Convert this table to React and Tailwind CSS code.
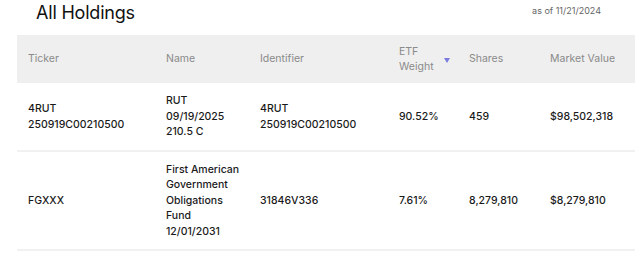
import React from 'react';

const rows = [
  {
    ticker: ['4RUT', '250919C00210500'],
    name: ['RUT', '09/19/2025', '210.5 C'],
    identifier: ['4RUT', '250919C00210500'],
    weight: '90.52%',
    shares: '459',
    value: '$98,502,318',
    h: 'h-[69px]',
  },
  {
    ticker: ['FGXXX'],
    name: ['First American', 'Government', 'Obligations', 'Fund', '12/01/2031'],
    identifier: ['31846V336'],
    weight: '7.61%',
    shares: '8,279,810',
    value: '$8,279,810',
    h: 'h-[99px]',
  },
];

const cols = 'grid grid-cols-[138px_94px_139px_70px_81px_96px]';

const Lines = ({ lines }) => (
  <div className="leading-[15.5px]">
    {lines.map((l) => (
      <div key={l}>{l}</div>
    ))}
  </div>
);

export default function App() {
  return (
    <div className="w-[640px] h-[268px] bg-white font-['Inter',sans-serif] overflow-hidden">
      {/* Title */}
      <div className="flex items-end justify-between h-[35px] pl-[36px] pr-[39px]">
        <h2 className="text-[18px] leading-none text-[#111] mb-[13px] tracking-[-0.2px]">All Holdings</h2>
        <span className="text-[9px] text-[#666] mb-[18px]">as of 11/21/2024</span>
      </div>

      <div className="ml-[17px] w-[618px]">
        {/* Header */}
        <div className={`${cols} h-[48px] bg-[#efefef] items-center text-[10.5px] text-[#8a8a8a]`}>
          <div className="pl-[11px]">Ticker</div>
          <div className="pl-[11px]">Name</div>
          <div className="pl-[11px]">Identifier</div>
          <div className="pl-[11px] flex items-center gap-[10px] leading-[15px]">
            <div>
              ETF
              <br />
              Weight
            </div>
            <svg width="6" height="5" viewBox="0 0 6 5" className="mt-[2px]">
              <path d="M0 0h6L3 5z" fill="#7c7ce0" />
            </svg>
          </div>
          <div className="pl-[11px]">Shares</div>
          <div className="pl-[11px]">Market Value</div>
        </div>

        {/* Rows */}
        {rows.map((r) => (
          <div
            key={r.weight}
            className={`${cols} ${r.h} items-center border-b-2 border-[#f1f1f1] text-[10.5px] font-medium text-[#1a1a1a]`}
          >
            <div className="pl-[11px]"><Lines lines={r.ticker} /></div>
            <div className="pl-[11px]"><Lines lines={r.name} /></div>
            <div className="pl-[11px]"><Lines lines={r.identifier} /></div>
            <div className="pl-[11px]">{r.weight}</div>
            <div className="pl-[11px]">{r.shares}</div>
            <div className="pl-[11px]">{r.value}</div>
          </div>
        ))}
      </div>
    </div>
  );
}
